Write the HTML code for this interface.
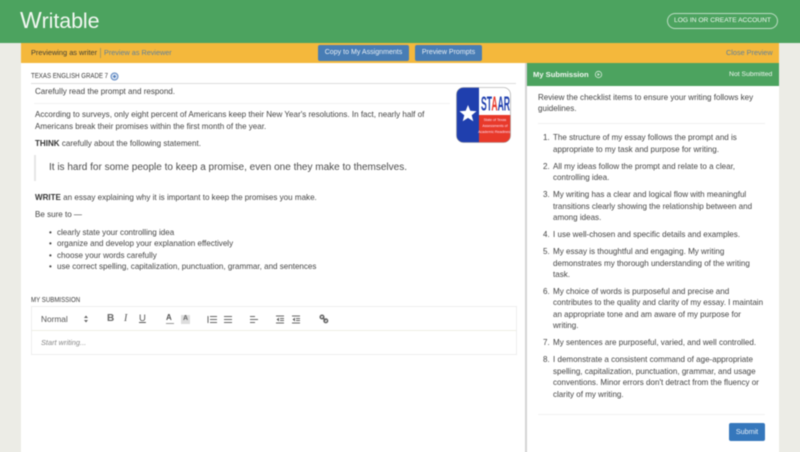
<!DOCTYPE html>
<html><head><meta charset="utf-8"><style>
html,body{margin:0;padding:0;background:#ecece6}
#w{position:relative;width:800px;height:452px;overflow:hidden;background:#ecece6}
#p{position:absolute;left:0;top:0;width:800px;height:452px;font-family:"Liberation Sans",sans-serif;color:#444;font-size:8.05px;filter:blur(.45px)}
.a{position:absolute}
.t{position:absolute;white-space:nowrap;line-height:12px;height:12px;transform:translateY(-6px)}
.btn{position:absolute;background:#487db5;color:#e8eef5;border-radius:2px;text-align:center;font-size:7.05px;line-height:16px;height:16px;top:45px}
b{color:#333}
svg{position:absolute}
</style></head><body><div id="w"><div id="p">
<div class="a" style="left:-6px;top:-6px;width:812px;height:49px;background:#4ca35f"></div>
<div class="t" style="left:20px;top:20px;line-height:24px;height:24px;transform:translateY(-12px);color:#f2f7f2"><span style="font-size:21.5px;letter-spacing:-.1px"><span style="font-size:23px">W</span>ritable</span></div>
<div class="a" style="left:667px;top:13px;width:109px;height:14px;border:1px solid #bcdcc3;border-radius:8px;color:#f2f7f2;font-size:6.65px;line-height:14px;text-align:center;white-space:nowrap">LOG IN OR CREATE ACCOUNT</div>

<div class="a" style="left:21px;top:43px;width:758px;height:20px;background:#f4b83c"></div>
<div class="t" style="left:31px;top:53px;font-size:7.4px;color:#3f3f38">Previewing as writer</div>
<div class="a" style="left:100px;top:48px;width:1px;height:10px;background:#a99a60"></div>
<div class="t" style="left:104px;top:53px;font-size:7.25px;color:#5d7f9e">Preview as Reviewer</div>
<div class="btn" style="left:318px;width:91px">Copy to My Assignments</div>
<div class="btn" style="left:415px;width:67px">Preview Prompts</div>
<div class="t" style="left:726px;top:53px;font-size:7.3px;color:#5d7f9e">Close Preview</div>

<div class="a" style="left:21px;top:63px;width:505px;height:395px;background:#fff"></div>
<div class="a" style="left:525px;top:63px;width:2px;height:395px;background:#d4d4d4"></div>
<div class="a" style="left:527px;top:63px;width:252px;height:395px;background:#fff"></div>
<div class="a" style="left:527px;top:63px;width:252px;height:23px;background:#4ca35f"></div>

<div class="t" style="left:31px;top:76px;font-size:7.2px;color:#3c3c3c;transform:translateY(-6px) scaleX(.85);transform-origin:left">TEXAS ENGLISH GRADE 7</div>
<svg style="left:110px;top:72px" width="9" height="9" viewBox="0 0 9 9"><circle cx="4.5" cy="4.5" r="3.5" fill="#d8e3f2" stroke="#5b85c0"/><path d="M3 4.5h3M4.5 3v3" stroke="#3e6fb5"/></svg>
<div class="a" style="left:31px;top:83px;width:485px;height:1px;background:#ddd"></div>
<div class="a" style="left:34px;top:103px;width:416px;height:1px;background:#f2f2f2"></div>

<div class="t" style="left:35px;top:92px">Carefully read the prompt and respond.</div>
<div class="t" style="left:35px;top:115px">According to surveys, only eight percent of Americans keep their New Year's resolutions. In fact, nearly half of</div>
<div class="t" style="left:35px;top:127px">Americans break their promises within the first month of the year.</div>
<div class="t" style="left:35px;top:144px"><b>THINK</b> carefully about the following statement.</div>
<div class="a" style="left:34px;top:155px;width:2px;height:26px;background:#e6e6e6"></div>
<div class="t" style="left:49px;top:168px;font-size:10px;color:#4a4a4a">It is hard for some people to keep a promise, even one they make to themselves.</div>
<div class="t" style="left:35px;top:198px"><b>WRITE</b> an essay explaining why it is important to keep the promises you make.</div>
<div class="t" style="left:35px;top:215px">Be sure to —</div>
<div class="t" style="left:49px;top:232.5px">•</div><div class="t" style="left:57px;top:232.5px">clearly state your controlling idea</div>
<div class="t" style="left:49px;top:244px">•</div><div class="t" style="left:57px;top:244px">organize and develop your explanation effectively</div>
<div class="t" style="left:49px;top:255.5px">•</div><div class="t" style="left:57px;top:255.5px">choose your words carefully</div>
<div class="t" style="left:49px;top:267px">•</div><div class="t" style="left:57px;top:267px">use correct spelling, capitalization, punctuation, grammar, and sentences</div>

<svg style="left:456px;top:87px" width="55" height="56" viewBox="0 0 55 56">
<defs><clipPath id="c"><rect x=".5" y=".5" width="54" height="55" rx="7"/></clipPath></defs>
<g clip-path="url(#c)"><rect width="55" height="56" fill="#fff"/><rect width="23" height="56" fill="#1f3fae"/><rect x="23" y="28" width="32" height="28" fill="#e8392a"/>
<path d="M12 18l2.3 5.800 6.200.4-4.800 4 1.600 6-5.300-3.300-5.300 3.300 1.600-6-4.800-4 6.200-.4z" fill="#fff"/>
<text x="25" y="23.500" font-family="Liberation Sans" font-weight="bold" font-size="20" fill="#1f3fae" textLength="29" lengthAdjust="spacingAndGlyphs">ST<tspan fill="#e8392a">A</tspan>AR</text>
<text x="39" y="34" text-anchor="middle" font-family="Liberation Sans" font-size="3.6" fill="#fde">State of Texas</text>
<text x="39" y="40" text-anchor="middle" font-family="Liberation Sans" font-size="3.6" fill="#fde">Assessments of</text>
<text x="39" y="46" text-anchor="middle" font-family="Liberation Sans" font-size="3.6" fill="#fde">Academic Readiness</text></g>
<rect x=".5" y=".5" width="54" height="55" rx="7" fill="none" stroke="#999" stroke-width=".6"/></svg>

<div class="t" style="left:31px;top:299.5px;font-size:7.2px;color:#3c3c3c;transform:translateY(-6px) scaleX(.85);transform-origin:left">MY SUBMISSION</div>
<div class="a" style="left:31px;top:306px;width:484px;height:47px;border:1px solid #eee"></div>
<div class="a" style="left:32px;top:330px;width:484px;height:1px;background:#eeeee4"></div>
<div class="t" style="left:41px;top:318.5px;font-size:8.3px;color:#555">Normal</div>
<svg style="left:83px;top:315px" width="6" height="8" viewBox="0 0 6 8"><path d="M3 .5L5 3H1zM3 7.500L5 5H1z" fill="#666"/></svg>
<div class="t" style="left:107px;top:318.5px;font-weight:bold;font-size:10px;color:#666">B</div>
<div class="t" style="left:124px;top:318.5px;font-style:italic;font-family:'Liberation Serif';font-size:10px;color:#555">I</div>
<div class="t" style="left:139px;top:318.5px;font-size:9.5px;color:#555;text-decoration:underline">U</div>
<div class="t" style="left:166px;top:318px;font-size:8px;color:#555;font-weight:bold">A</div>
<div class="a" style="left:165.5px;top:323px;width:8px;height:1px;background:#999"></div>
<div class="a" style="left:181px;top:315px;width:9px;height:9px;background:#ddd"></div>
<div class="t" style="left:183px;top:319px;font-size:7px;color:#666;font-weight:bold">A</div>
<svg style="left:207px;top:315px" width="60" height="9" viewBox="0 0 60 9" stroke="#666" stroke-width="1" fill="none"><path d="M1 1v7M3 1.500h7M3 4.500h7M3 7.500h7M17 1.500h8M17 4.500h8M17 7.500h8M43 1.500h5M43 4.500h8M43 7.500h5"/></svg>
<svg style="left:276px;top:315px" width="26" height="9" viewBox="0 0 26 9" stroke="#666" stroke-width="1" fill="none"><path d="M0 1h8M4 3.500h4M4 5.500h4M0 8h8M16 1h8M20 3.500h4M20 5.500h4M16 8h8"/><path d="M3 2.500L.5 4.500 3 6.500zM19 2.500l-2.500 2 2.500 2z" fill="#666" stroke="none"/></svg>
<svg style="left:319px;top:314px" width="10" height="10" viewBox="0 0 10 10" fill="none" stroke="#666" stroke-width="1.5"><circle cx="3" cy="3" r="1.800"/><circle cx="6.800" cy="6.800" r="1.800"/><path d="M3.500 3.500l3 3"/></svg>
<div class="t" style="left:41px;top:342.5px;font-style:italic;font-size:7.4px;color:#888">Start writing...</div>

<div class="t" style="left:533px;top:74.5px;font-weight:bold;font-size:7.6px;color:#f3f8f3">My Submission</div>
<svg style="left:594px;top:70px" width="9" height="9" viewBox="0 0 9 9"><circle cx="4.5" cy="4.5" r="3.2" fill="none" stroke="#d6ebda" stroke-width=".8"/><path d="M3.500 3l2.500 1.500L3.500 6z" fill="#d6ebda"/></svg>
<div class="t" style="left:729px;top:74.5px;font-size:6.85px;color:#f3f8f3">Not Submitted</div>

<div class="t" style="left:538px;top:97.5px">Review the checklist items to ensure your writing follows key</div>
<div class="t" style="left:538px;top:109px">guidelines.</div>
<div class="a" style="left:538px;top:123px;width:227px;height:1px;background:#f0f0f0"></div>

<div class="t" style="left:543px;top:138px">1.</div><div class="t" style="left:553px;top:138px">The structure of my essay follows the prompt and is</div>
<div class="t" style="left:553px;top:149.5px">appropriate to my task and purpose for writing.</div>
<div class="t" style="left:543px;top:166.5px">2.</div><div class="t" style="left:553px;top:166.5px">All my ideas follow the prompt and relate to a clear,</div>
<div class="t" style="left:553px;top:178px">controlling idea.</div>
<div class="t" style="left:543px;top:195px">3.</div><div class="t" style="left:553px;top:195px">My writing has a clear and logical flow with meaningful</div>
<div class="t" style="left:553px;top:206.5px">transitions clearly showing the relationship between and</div>
<div class="t" style="left:553px;top:218px">among ideas.</div>
<div class="t" style="left:543px;top:235px">4.</div><div class="t" style="left:553px;top:235px">I use well-chosen and specific details and examples.</div>
<div class="t" style="left:543px;top:252px">5.</div><div class="t" style="left:553px;top:252px">My essay is thoughtful and engaging. My writing</div>
<div class="t" style="left:553px;top:263.5px">demonstrates my thorough understanding of the writing</div>
<div class="t" style="left:553px;top:275px">task.</div>
<div class="t" style="left:543px;top:292px">6.</div><div class="t" style="left:553px;top:292px">My choice of words is purposeful and precise and</div>
<div class="t" style="left:553px;top:303px">contributes to the quality and clarity of my essay. I maintain</div>
<div class="t" style="left:553px;top:314.5px">an appropriate tone and am aware of my purpose for</div>
<div class="t" style="left:553px;top:326px">writing.</div>
<div class="t" style="left:543px;top:343px">7.</div><div class="t" style="left:553px;top:343px">My sentences are purposeful, varied, and well controlled.</div>
<div class="t" style="left:543px;top:360px">8.</div><div class="t" style="left:553px;top:360px">I demonstrate a consistent command of age-appropriate</div>
<div class="t" style="left:553px;top:371.5px">spelling, capitalization, punctuation, grammar, and usage</div>
<div class="t" style="left:553px;top:383px">conventions. Minor errors don't detract from the fluency or</div>
<div class="t" style="left:553px;top:394.5px">clarity of my writing.</div>
<div class="a" style="left:538px;top:414px;width:227px;height:1px;background:#f2f2f2"></div>
<div class="a" style="left:729px;top:423px;width:36px;height:18px;background:#3577bc;border-radius:2px;color:#e6eef7;font-size:7.2px;line-height:18px;text-align:center">Submit</div>
</div></div></body></html>
